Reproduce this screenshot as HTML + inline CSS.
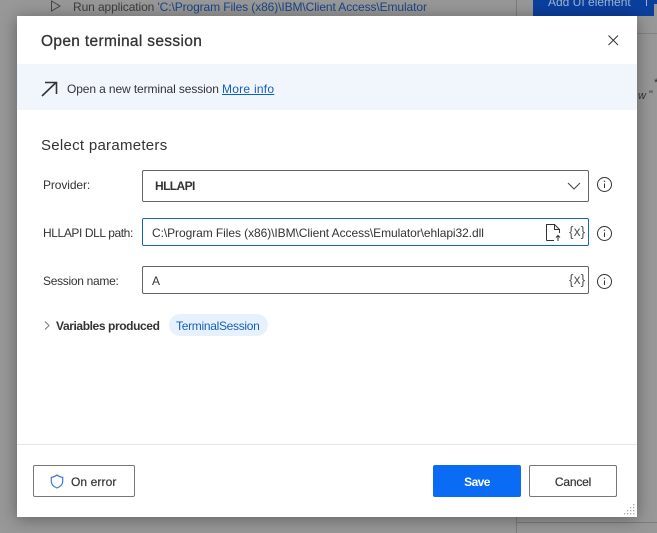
<!DOCTYPE html>
<html><head><meta charset="utf-8">
<style>
html,body{margin:0;padding:0}
body{width:657px;height:533px;overflow:hidden;position:relative;background:#989898;font-family:"Liberation Sans",sans-serif;color:#323130}
.a{position:absolute;white-space:nowrap}
.lbl{font-size:12px;line-height:16px;color:#333}
.box{position:absolute;box-sizing:border-box;left:142px;width:447px;background:#fff;border:1px solid #666;border-radius:2px}
.info{position:absolute;left:597px;width:15px;height:15px}
.x{font-size:13.5px;line-height:14px;color:#555;font-family:"Liberation Sans",sans-serif;letter-spacing:.2px}
</style></head>
<body>
<div class="a" style="left:516px;top:0;width:1px;height:533px;background:#7d7d7d"></div>
<div class="a" style="left:516px;top:522px;width:141px;height:1px;background:#7d7d7d"></div>
<div class="a" style="left:637px;top:33px;width:20px;height:1px;background:#848484"></div>
<svg class="a" style="left:50px;top:0" width="12" height="14"><path d="M1.5 1 L10 6 L1.5 11 Z" fill="none" stroke="#444" stroke-width="1"/></svg>
<div class="a" style="left:73px;top:0;font-size:12px;line-height:15px;color:#3d3d3d;letter-spacing:-.1px">Run application <span style="color:#1a4488">'C:\Program Files (x86)\IBM\Client Access\Emulator</span></div>
<div class="a" style="left:533px;top:0;width:121px;height:16px;background:#0a3f9e"></div>
<div class="a" style="left:654px;top:0;width:3px;height:4px;background:#0a3f9e"></div>
<div class="a" style="left:548px;top:-6px;font-size:12px;line-height:16px;color:#9fb3d6">Add UI element</div>
<div class="a" style="left:646px;top:-4px;width:1px;height:10px;background:#9fb3d6"></div>
<div class="a" style="left:638px;top:89px;font-size:11px;line-height:14px;color:#333;font-style:italic">w</div>
<div class="a" style="left:649px;top:88px;font-size:11px;line-height:14px;color:#333">"</div>
<div class="a" style="left:654px;top:76px;font-size:11px;line-height:14px;color:#333">*</div>

<div class="a" style="left:17px;top:16px;width:620px;height:501px;background:#fff;box-shadow:0 2px 16px rgba(0,0,0,.38)"></div>
<div class="a" style="left:41px;top:32px;font-size:15.5px;line-height:20px;color:#333;-webkit-text-stroke:.3px #333;letter-spacing:.33px">Open terminal session</div>
<svg class="a" style="left:607px;top:34px" width="12" height="12"><path d="M1.5 1.5 L11 11 M11 1.5 L1.5 11" stroke="#333" stroke-width="1" fill="none"/></svg>
<div class="a" style="left:17px;top:64px;width:620px;height:46px;background:#f1f6fd"></div>
<svg class="a" style="left:41px;top:81px" width="17" height="16"><path d="M1 15 L15 1.5 M4 1.5 H15.5 V13" stroke="#333" stroke-width="1.6" fill="none"/></svg>
<div class="a" style="left:67px;top:81px;font-size:12px;line-height:16px;color:#333;letter-spacing:-.11px">Open a new terminal session <span style="color:#0f5fc4;text-decoration:underline;letter-spacing:.25px">More info</span></div>

<div class="a" style="left:41px;top:136px;font-size:15px;line-height:20px;color:#333;letter-spacing:.28px">Select parameters</div>

<div class="a lbl" style="left:43px;top:177px;letter-spacing:-.1px">Provider:</div>
<div class="box" style="top:170px;height:32px"></div>
<div class="a" style="left:155px;top:178px;font-size:12px;line-height:16px;color:#333;font-weight:700;letter-spacing:-.6px">HLLAPI</div>
<svg class="a" style="left:567px;top:182px" width="14" height="9"><path d="M1 1 L7 7 L13 1" stroke="#444" stroke-width="1" fill="none"/></svg>
<svg class="info" style="top:177px" viewBox="0 0 15 15"><circle cx="7.5" cy="7.5" r="7" fill="none" stroke="#333"/><path d="M7.5 6.5 V11" stroke="#333"/><circle cx="7.5" cy="4.3" r=".7" fill="#333"/></svg>

<div class="a lbl" style="left:43px;top:225px;letter-spacing:-.4px">HLLAPI DLL path:</div>
<div class="box" style="top:218px;height:28px;border-color:#1565c0"></div>
<div class="a" style="left:152px;top:225px;font-size:12px;line-height:16px;color:#333;letter-spacing:-.07px">C:\Program Files (x86)\IBM\Client Access\Emulator\ehlapi32.dll</div>
<svg class="a" style="left:545px;top:224px" width="17" height="18"><path d="M1.5 16.5 V.5 H9.5 L14.5 5.5 V9 M9.5 .5 V5.5 H14.5 M9 16.5 H1.5 M13 17 V11.5 M11 13.5 L13 11.5 L15 13.5" stroke="#333" stroke-width="1" fill="none"/></svg>
<div class="a x" style="left:569px;top:225px">{x}</div>
<svg class="info" style="top:226px" viewBox="0 0 15 15"><circle cx="7.5" cy="7.5" r="7" fill="none" stroke="#333"/><path d="M7.5 6.5 V11" stroke="#333"/><circle cx="7.5" cy="4.3" r=".7" fill="#333"/></svg>

<div class="a lbl" style="left:43px;top:273px;letter-spacing:-.3px">Session name:</div>
<div class="box" style="top:266px;height:28px"></div>
<div class="a" style="left:152px;top:273px;font-size:12px;line-height:16px;color:#333">A</div>
<div class="a x" style="left:569px;top:273px">{x}</div>
<svg class="info" style="top:274px" viewBox="0 0 15 15"><circle cx="7.5" cy="7.5" r="7" fill="none" stroke="#333"/><path d="M7.5 6.5 V11" stroke="#333"/><circle cx="7.5" cy="4.3" r=".7" fill="#333"/></svg>

<svg class="a" style="left:44px;top:321px" width="6" height="9"><path d="M1 .5 L5 4.5 L1 8.5" stroke="#777" stroke-width="1" fill="none"/></svg>
<div class="a" style="left:56px;top:318px;font-size:12px;line-height:16px;font-weight:700;color:#333;letter-spacing:-.4px">Variables produced</div>
<div class="a" style="left:169px;top:314px;width:99px;height:22px;border-radius:11px;background:#e7f1fd"></div>
<div class="a" style="left:176px;top:318px;font-size:12px;line-height:16px;color:#1560bd;letter-spacing:-.3px">TerminalSession</div>

<div class="a" style="left:17px;top:444px;width:620px;height:1px;background:#e6e6e6"></div>
<div class="a" style="left:33px;top:465px;width:102px;height:32px;box-sizing:border-box;border:1px solid #777;border-radius:2px;background:#fff"></div>
<svg class="a" style="left:50px;top:474px" width="14" height="15"><path d="M7 1 C5 2.6 3.2 3.2 1.3 3.3 V7.5 C1.3 10.5 3.5 12.6 7 14 C10.5 12.6 12.7 10.5 12.7 7.5 V3.3 C10.8 3.2 9 2.6 7 1 Z" fill="none" stroke="#3b78d0" stroke-width="1.2"/></svg>
<div class="a" style="left:71px;top:474px;font-size:12px;line-height:16px;color:#333;-webkit-text-stroke:.2px #333;letter-spacing:.1px">On error</div>

<div class="a" style="left:433px;top:465px;width:88px;height:32px;background:#0a6cf5;border-radius:2px"></div>
<div class="a" style="left:433px;top:474px;width:88px;text-align:center;font-size:12px;line-height:16px;font-weight:700;color:#fff;letter-spacing:-.6px">Save</div>
<div class="a" style="left:529px;top:465px;width:88px;height:32px;box-sizing:border-box;border:1px solid #777;border-radius:2px;background:#fff"></div>
<div class="a" style="left:529px;top:474px;width:88px;text-align:center;font-size:12px;line-height:16px;color:#333;-webkit-text-stroke:.2px #333;letter-spacing:-.2px">Cancel</div>

<svg class="a" style="left:624px;top:504px" width="12" height="12" fill="#aaa"><rect x="9" y="0" width="1.3" height="1.3"/><rect x="6" y="3" width="1.3" height="1.3"/><rect x="9" y="3" width="1.3" height="1.3"/><rect x="3" y="6" width="1.3" height="1.3"/><rect x="6" y="6" width="1.3" height="1.3"/><rect x="9" y="6" width="1.3" height="1.3"/><rect x="0" y="9" width="1.3" height="1.3"/><rect x="3" y="9" width="1.3" height="1.3"/><rect x="6" y="9" width="1.3" height="1.3"/><rect x="9" y="9" width="1.3" height="1.3"/></svg>
</body></html>
